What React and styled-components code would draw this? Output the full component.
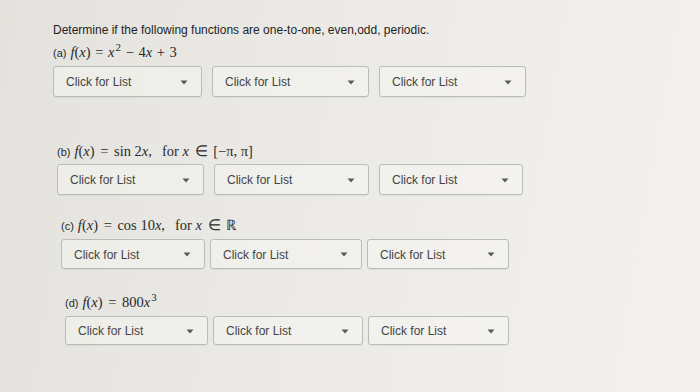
import styled, { createGlobalStyle } from "styled-components";

const GlobalStyle = createGlobalStyle`
  html, body {
    margin: 0;
    padding: 0;
  }
  body {
    width: 700px;
    height: 392px;
    overflow: hidden;
    background: linear-gradient(100deg, #e3e2dd 0%, #ebeae6 45%, #f2f1ee 100%);
    font-family: "Liberation Sans", Arial, sans-serif;
    color: #262626;
  }
`;

const Page = styled.div`
  padding-top: 22px;
`;

const Title = styled.div`
  padding-left: 53px;
  font-size: 12px;
  line-height: 16px;
  color: #1f1f1f;
`;

const Section = styled.div`
  margin-top: ${(p) => p.$top}px;
  padding-left: ${(p) => p.$indent}px;
`;

const Label = styled.div`
  display: flex;
  align-items: baseline;
  height: 20px;
  line-height: 20px;
  color: #2a2a2a;
`;

const Tag = styled.span`
  font-size: 11px;
  margin-right: 4px;
`;

const Formula = styled.span`
  font-family: "Liberation Serif", "Times New Roman", serif;
  font-size: 14.5px;
  white-space: nowrap;
`;

const I = styled.i`
  font-style: italic;
`;

const Op = styled.span`
  padding: 0 ${(p) => p.$pad ?? 1}px;
`;

const Gap = styled.span`
  display: inline-block;
  width: ${(p) => p.$w}px;
`;

const Sup = styled.sup`
  font-size: 11px;
  line-height: 0;
  vertical-align: 6px;
  margin-left: 1px;
`;

const Row = styled.div`
  display: flex;
  gap: ${(p) => p.$space}px;
  margin-top: ${(p) => p.$gap}px;
`;

const Select = styled.div`
  box-sizing: border-box;
  width: ${(p) => p.$w}px;
  height: ${(p) => p.$h}px;
  border: 1px solid #bcbcb7;
  border-radius: 3px;
  background: rgba(248, 248, 245, 0.45);
  box-shadow: 0 1px 1px rgba(0, 0, 0, 0.06);
  display: flex;
  align-items: center;
  justify-content: space-between;
  padding: 1px 13px 0 12px;
  font-size: 12px;
  color: #444;

  svg {
    flex-shrink: 0;
  }
`;

const questions = [
  {
    id: "a",
    top: 4,
    indent: 53,
    gap: 4,
    h: 31,
    space: 10,
    widths: [149, 157, 147],
    math: () => (
      <>
        <I>f</I>(<I>x</I>) <Op>=</Op> <I>x</I>
        <Sup>2</Sup> <Op>−</Op> 4<I>x</I> <Op>+</Op> 3
      </>
    ),
  },
  {
    id: "b",
    top: 44,
    indent: 57,
    gap: 3,
    h: 31,
    space: 10,
    widths: [147, 155, 144],
    math: () => (
      <>
        <I>f</I>(<I>x</I>) <Op $pad={2}>=</Op> sin 2<I>x</I>,<Gap $w={10} />for <I>x</I> <Op $pad={2}>∈</Op> [−π, π]
      </>
    ),
  },
  {
    id: "c",
    top: 20,
    indent: 61,
    gap: 4,
    h: 30,
    space: 5,
    widths: [144, 152, 142],
    math: () => (
      <>
        <I>f</I>(<I>x</I>) <Op $pad={2}>=</Op> cos 10<I>x</I>,<Gap $w={10} />for <I>x</I> <Op $pad={2}>∈</Op> ℝ
      </>
    ),
  },
  {
    id: "d",
    top: 23,
    indent: 65,
    gap: 4,
    h: 29,
    space: 5,
    widths: [143, 150, 141],
    math: () => (
      <>
        <I>f</I>(<I>x</I>) <Op $pad={2}>=</Op> 800<I>x</I>
        <Sup>3</Sup>
      </>
    ),
  },
];

const Caret = () => (
  <svg width="8" height="5" viewBox="0 0 8 5">
    <path d="M0.5 0.5 L7.5 0.5 L4 4.5 Z" fill="#5a5a5a" />
  </svg>
);

const App = () => {
  return (
    <Page>
      <GlobalStyle />
      <Title>Determine if the following functions are one-to-one, even,odd, periodic.</Title>
      {questions.map((q) => (
        <Section key={q.id} $top={q.top} $indent={q.indent}>
          <Label>
            <Tag>({q.id})</Tag>
            <Formula>{q.math()}</Formula>
          </Label>
          <Row $gap={q.gap} $space={q.space}>
            {q.widths.map((w, i) => (
              <Select key={i} $w={w} $h={q.h}>
                <span>Click for List</span>
                <Caret />
              </Select>
            ))}
          </Row>
        </Section>
      ))}
    </Page>
  );
};

export default App;
